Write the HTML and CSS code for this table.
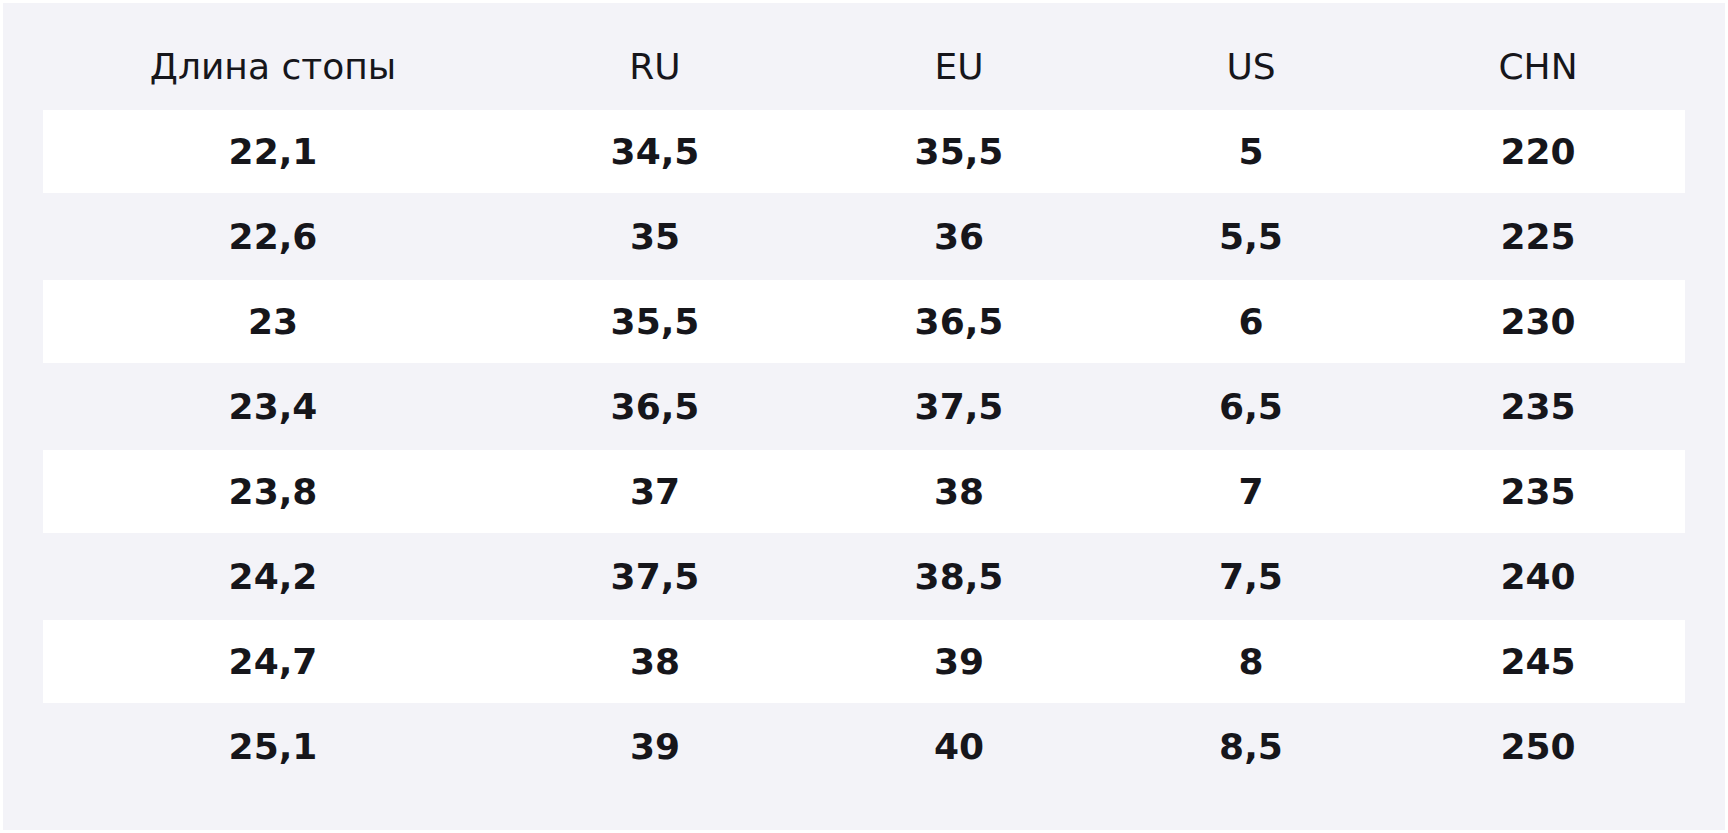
FILE: index.html
```html
<!DOCTYPE html>
<html lang="ru">
<head>
<meta charset="utf-8">
<title>Таблица размеров</title>
<link rel="stylesheet" href="styles.css">
</head>
<body>
<div class="sizes">
  <table class="size-table">
    <colgroup>
      <col class="c-len">
      <col class="c-ru">
      <col class="c-eu">
      <col class="c-us">
      <col class="c-chn">
    </colgroup>
    <thead>
      <tr><th>Длина стопы</th><th>RU</th><th>EU</th><th>US</th><th>CHN</th></tr>
    </thead>
    <tbody>
      <tr><td>22,1</td><td>34,5</td><td>35,5</td><td>5</td><td>220</td></tr>
      <tr><td>22,6</td><td>35</td><td>36</td><td>5,5</td><td>225</td></tr>
      <tr><td>23</td><td>35,5</td><td>36,5</td><td>6</td><td>230</td></tr>
      <tr><td>23,4</td><td>36,5</td><td>37,5</td><td>6,5</td><td>235</td></tr>
      <tr><td>23,8</td><td>37</td><td>38</td><td>7</td><td>235</td></tr>
      <tr><td>24,2</td><td>37,5</td><td>38,5</td><td>7,5</td><td>240</td></tr>
      <tr><td>24,7</td><td>38</td><td>39</td><td>8</td><td>245</td></tr>
      <tr><td>25,1</td><td>39</td><td>40</td><td>8,5</td><td>250</td></tr>
    </tbody>
  </table>
</div>
</body>
</html>
```
FILE: styles.css
```css
html, body {
  margin: 0;
  padding: 0;
  background: #ffffff;
}

body {
  padding: 3px;
  font-family: "DejaVu Sans", "Liberation Sans", sans-serif;
  color: #16161b;
}

.sizes {
  background: #f3f3f8;
  height: 827px;
  box-sizing: border-box;
  padding: 20px 40px 0 40px;
}

.size-table {
  width: 100%;
  border-collapse: separate;
  border-spacing: 0 2px;
  table-layout: fixed;
}

.c-len { width: 460px; }
.c-ru { width: 304px; }
.c-eu { width: 304px; }
.c-us { width: 280px; }
.c-chn { width: 294px; }

.size-table th,
.size-table td {
  height: 83px;
  padding: 0;
  text-align: center;
  vertical-align: middle;
  font-size: 36px;
  line-height: 42px;
  box-sizing: border-box;
}

.size-table th {
  font-weight: normal;
}

.size-table td {
  font-weight: bold;
}

.size-table tbody tr:nth-child(odd) td {
  background: #ffffff;
}
```
